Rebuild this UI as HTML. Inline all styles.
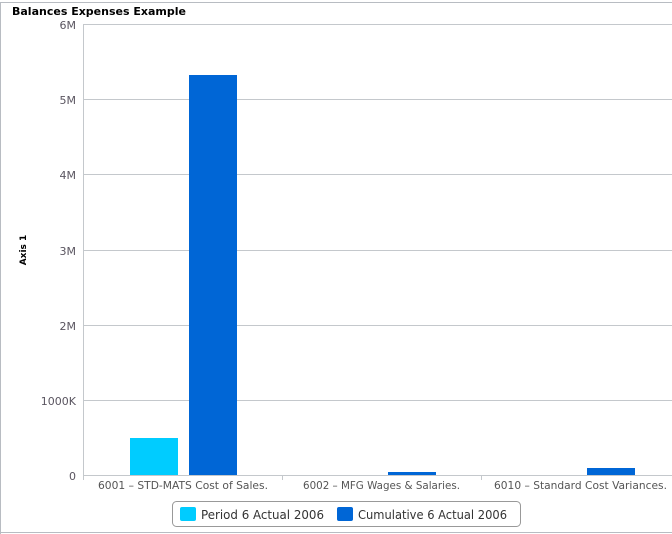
<!DOCTYPE html>
<html><head><style>
html,body{margin:0;padding:0;background:#fff;}
svg{display:block;font-family:"DejaVu Sans","Liberation Sans",sans-serif;}
</style></head><body>
<svg width="672" height="534" viewBox="0 0 672 534" xmlns="http://www.w3.org/2000/svg">
<rect x="0" y="0" width="672" height="534" fill="#fff"/>
<line x1="0" y1="2.5" x2="672" y2="2.5" stroke="#b8bcc2"/>
<line x1="0.5" y1="2" x2="0.5" y2="534" stroke="#b8bcc2"/>
<line x1="0" y1="532.5" x2="672" y2="532.5" stroke="#b8bcc2"/>
<text x="12" y="15" font-size="11" font-weight="bold" fill="#000">Balances Expenses Example</text>
<g stroke="#c4c8cc" stroke-width="1">
<line x1="83" y1="24.5" x2="672" y2="24.5"/>
<line x1="83" y1="99.5" x2="672" y2="99.5"/>
<line x1="83" y1="174.5" x2="672" y2="174.5"/>
<line x1="83" y1="250.5" x2="672" y2="250.5"/>
<line x1="83" y1="325.5" x2="672" y2="325.5"/>
<line x1="83" y1="400.5" x2="672" y2="400.5"/>
<line x1="83" y1="475.5" x2="672" y2="475.5"/>
<line x1="83.5" y1="24" x2="83.5" y2="480"/>
<line x1="282.5" y1="475" x2="282.5" y2="480"/>
<line x1="481.5" y1="475" x2="481.5" y2="480"/>
</g>
<g font-size="11" fill="#5a5560" text-anchor="end">
<text x="76" y="29">6M</text>
<text x="76" y="104">5M</text>
<text x="76" y="179">4M</text>
<text x="76" y="255">3M</text>
<text x="76" y="330">2M</text>
<text x="76" y="405">1000K</text>
<text x="76" y="480">0</text>
</g>
<text transform="translate(26,250) rotate(-90)" text-anchor="middle" font-size="9" font-weight="bold" fill="#000">Axis 1</text>
<rect x="130" y="438" width="48" height="37" fill="#00ccff"/>
<rect x="189" y="75" width="48" height="400" fill="#0066d6"/>
<rect x="388" y="472" width="48" height="3" fill="#0066d6"/>
<rect x="587" y="468" width="48" height="7" fill="#0066d6"/>
<g font-size="11" fill="#555">
<text x="98" y="489" textLength="170" lengthAdjust="spacingAndGlyphs">6001 – STD-MATS Cost of Sales.</text>
<text x="303" y="489" textLength="157" lengthAdjust="spacingAndGlyphs">6002 – MFG Wages &amp; Salaries.</text>
<text x="494" y="489" textLength="173" lengthAdjust="spacingAndGlyphs">6010 – Standard Cost Variances.</text>
</g>
<rect x="172.5" y="501.5" width="348" height="25" rx="4" fill="#fff" stroke="#999"/>
<rect x="180" y="507" width="16" height="14" rx="2" fill="#00ccff"/>
<text x="201" y="519" font-size="12" fill="#333" textLength="123" lengthAdjust="spacingAndGlyphs">Period 6 Actual 2006</text>
<rect x="337" y="507" width="16" height="14" rx="2" fill="#0066d6"/>
<text x="358" y="519" font-size="12" fill="#333" textLength="149" lengthAdjust="spacingAndGlyphs">Cumulative 6 Actual 2006</text>
</svg>
</body></html>
